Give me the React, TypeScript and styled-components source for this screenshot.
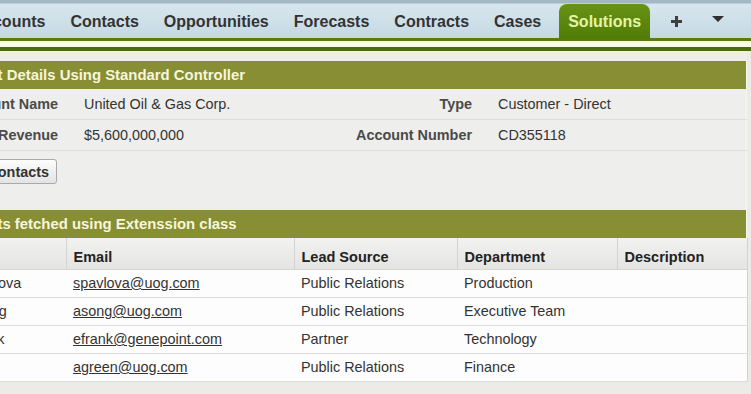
import React from "react";
import styled, { createGlobalStyle } from "styled-components";

const Global = createGlobalStyle`
  html, body { margin: 0; padding: 0; }
  body {
    font-family: "Liberation Sans", Arial, sans-serif;
    background: #ecebe7;
    overflow: hidden;
  }
`;

const Viewport = styled.div`
  width: 751px;
  height: 394px;
  overflow: hidden;
  background: #ecebe7;
`;

const TabBar = styled.nav`
  height: 38px;
  box-sizing: border-box;
  padding-top: 4px;
  background: linear-gradient(#a3b8c4 0, #a3b8c4 3px, #d7e6ee 4px, #c5d9e3 100%);
  display: flex;
  align-items: stretch;
  overflow: hidden;
`;

const TabStrip = styled.div`
  display: flex;
  align-items: stretch;
  margin-left: -40px;
`;

const Tab = styled.div<{ $active?: boolean; $icon?: boolean }>`
  display: flex;
  align-items: center;
  white-space: nowrap;
  font-size: 16px;
  font-weight: bold;
  padding-top: 1px;
  color: ${(p) => (p.$active ? "#e6f4a4" : "#333")};
  padding-left: ${(p) => (p.$active ? "9px" : p.$icon ? "15px" : "12.5px")};
  padding-right: ${(p) => (p.$active ? "9px" : p.$icon ? "15px" : "12.5px")};
  margin: ${(p) => (p.$active ? "0 5.5px" : "0")};
  border-radius: ${(p) => (p.$active ? "8px 8px 0 0" : "0")};
  background: ${(p) =>
    p.$active ? "linear-gradient(#679316, #517d07)" : "transparent"};
`;

const TabRule = styled.div`
  height: 6px;
  background: #f7fbe2;
  border-top: 3px solid #5a7b12;
  border-bottom: 4px solid #4c6a0e;
`;

const Content = styled.main`
  margin-left: -80px;
  width: 827px;
  padding-top: 10px;
  background: #efeee9;
`;

const Panel = styled.section`
  background: #eeeeec;
  border-right: 1px solid #f6f6ea;
`;

const PanelHeader = styled.h2<{ $indent: number }>`
  margin: 0;
  height: 28px;
  display: flex;
  align-items: center;
  padding-left: ${(p) => p.$indent}px;
  background: #888e33;
  color: #f6f6dc;
  font-size: 14.9px;
  font-weight: bold;
  white-space: nowrap;
`;

const DetailGrid = styled.div`
  display: grid;
  grid-template-columns: 151px 263px 151px 262px;
`;

const Cell = styled.div<{ $label?: boolean }>`
  height: 30px;
  display: flex;
  align-items: center;
  justify-content: ${(p) => (p.$label ? "flex-end" : "flex-start")};
  padding: ${(p) => (p.$label ? "0 13px 0 0" : "0 0 0 13px")};
  border-bottom: 1px solid #dddddb;
  font-size: 14.4px;
  font-weight: ${(p) => (p.$label ? "bold" : "normal")};
  color: ${(p) => (p.$label ? "#4a4a4a" : "#333")};
  white-space: nowrap;
`;

const ButtonRow = styled.div`
  width: 151px;
  box-sizing: border-box;
  display: flex;
  justify-content: flex-end;
  padding: 8px 14px 26px 0;
`;

const Btn = styled.button`
  height: 25px;
  padding: 0 7px;
  border: 1px solid #a9a9a9;
  border-radius: 3px;
  background: linear-gradient(#fdfdfd, #e3e3e3);
  font-family: "Liberation Sans", Arial, sans-serif;
  font-size: 14.4px;
  font-weight: bold;
  color: #333;
`;

const Table = styled.table`
  width: 827px;
  border-collapse: collapse;
  table-layout: fixed;
  background: #fdfdfd;
  border-right: 1px solid #d2d2d2;
  border-bottom: 1px solid #d2d2d2;
`;

const Th = styled.th<{ $w: number }>`
  width: ${(p) => p.$w}px;
  height: 31px;
  box-sizing: border-box;
  padding: 0 7px 4px;
  vertical-align: bottom;
  text-align: left;
  font-size: 14.5px;
  font-weight: bold;
  color: #222;
  background: linear-gradient(#f1f1f0, #e4e4e3);
  border-left: 1px solid #d3d3d3;
  border-bottom: 1px solid #d6d6d6;
  white-space: nowrap;
  &:first-child { border-left: none; }
`;

const Td = styled.td`
  height: 27px;
  padding: 0 7px;
  font-size: 14.4px;
  color: #333;
  border-bottom: 1px solid #dcdcdc;
  white-space: nowrap;
  &:first-child { padding-left: 10px; }
`;

const Mail = styled.a`
  color: #333;
  text-decoration: underline;
`;

const PlusIcon = () => (
  <svg width="11" height="11" viewBox="0 0 11 11">
    <rect x="4" y="0" width="3" height="11" fill="#3f3f3f" />
    <rect x="0" y="4" width="11" height="3" fill="#3f3f3f" />
  </svg>
);

const CaretIcon = () => (
  <svg width="12" height="6" viewBox="0 0 12 6" style={{ marginTop: -6 }}>
    <path d="M0 0 H12 L6 6 Z" fill="#2f2f2f" />
  </svg>
);

const tabs = ["Accounts", "Contacts", "Opportunities", "Forecasts", "Contracts", "Cases"];

const contacts = [
  { name: "Stella Pavlova", email: "spavlova@uog.com", lead: "Public Relations", dept: "Production" },
  { name: "Arthur Song", email: "asong@uog.com", lead: "Public Relations", dept: "Executive Team" },
  { name: "Edna Frank", email: "efrank@genepoint.com", lead: "Partner", dept: "Technology" },
  { name: "Avi Green", email: "agreen@uog.com", lead: "Public Relations", dept: "Finance" },
];

export default function App() {
  return (
    <Viewport>
      <Global />
      <TabBar>
        <TabStrip>
          {tabs.map((t) => (
            <Tab key={t}>{t}</Tab>
          ))}
          <Tab $active>Solutions</Tab>
          <Tab $icon>
            <PlusIcon />
          </Tab>
          <Tab $icon>
            <CaretIcon />
          </Tab>
        </TabStrip>
      </TabBar>
      <TabRule />
      <Content>
        <Panel>
          <PanelHeader $indent={23}>Account Details Using Standard Controller</PanelHeader>
          <DetailGrid>
            <Cell $label>Account Name</Cell>
            <Cell>United Oil &amp; Gas Corp.</Cell>
            <Cell $label>Type</Cell>
            <Cell>Customer - Direct</Cell>
            <Cell $label>Annual Revenue</Cell>
            <Cell>$5,600,000,000</Cell>
            <Cell $label>Account Number</Cell>
            <Cell>CD355118</Cell>
          </DetailGrid>
          <ButtonRow>
            <Btn type="button">Contacts</Btn>
          </ButtonRow>
        </Panel>
        <Panel>
          <PanelHeader $indent={27}>Contacts fetched using Extenssion class</PanelHeader>
          <Table>
            <thead>
              <tr>
                <Th $w={146}>Name</Th>
                <Th $w={228}>Email</Th>
                <Th $w={163}>Lead Source</Th>
                <Th $w={160}>Department</Th>
                <Th $w={130}>Description</Th>
              </tr>
            </thead>
            <tbody>
              {contacts.map((c) => (
                <tr key={c.email}>
                  <Td>{c.name}</Td>
                  <Td>
                    <Mail href="#">{c.email}</Mail>
                  </Td>
                  <Td>{c.lead}</Td>
                  <Td>{c.dept}</Td>
                  <Td></Td>
                </tr>
              ))}
            </tbody>
          </Table>
        </Panel>
      </Content>
    </Viewport>
  );
}
